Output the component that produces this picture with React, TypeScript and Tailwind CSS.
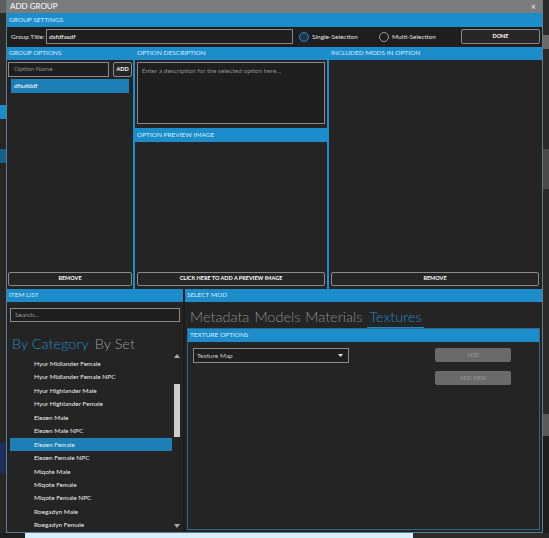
import React from "react";

const items = [
  "Hyur Midlander Female",
  "Hyur Midlander Female NPC",
  "Hyur Highlander Male",
  "Hyur Highlander Female",
  "Elezen Male",
  "Elezen Male NPC",
  "Elezen Female",
  "Elezen Female NPC",
  "Miqote Male",
  "Miqote Female",
  "Miqote Female NPC",
  "Roegadyn Male",
  "Roegadyn Female",
];

function Header({ children }: { children: React.ReactNode }) {
  return (
    <div className="h-[13px] shrink-0 bg-[#1d8ccb] pl-[2px] flex items-center text-[6.5px] text-[#d6eefb] uppercase leading-none">
      {children}
    </div>
  );
}

function DarkButton({ children, className = "" }: { children: React.ReactNode; className?: string }) {
  return (
    <div
      className={
        "h-[14px] shrink-0 border border-[#8a8a8a] rounded-[2px] bg-[#262626] flex items-center justify-center text-[5.5px] font-bold text-white leading-none " +
        className
      }
    >
      {children}
    </div>
  );
}

export default function App() {
  return (
    <div className="w-[549px] h-[538px] overflow-hidden bg-[#2b2b2b] flex flex-col font-['Lato','Noto_Sans',sans-serif]">
      <div className="flex h-[533px]">
        {/* background app, left edge */}
        <div className="w-[6px] flex flex-col shrink-0">
          <div className="h-[13px] bg-[#5e5e5e]" />
          <div className="h-[92px] bg-[#2a2a2a]" />
          <div className="h-[14px] bg-[#1e8bc8]" />
          <div className="h-[30px] bg-[#262626]" />
          <div className="h-[14px] bg-[#1a5f8a]" />
          <div className="h-[280px] bg-[#262626]" />
          <div className="h-[30px] bg-[#1b2f5a]" />
          <div className="flex-1 bg-[#262626]" />
        </div>

        {/* dialog */}
        <div className="w-[537px] shrink-0 border-x border-b border-[#5d7d8d] bg-[#1d8ccb] flex flex-col">
          {/* title bar */}
          <div className="h-[13px] bg-[#7c7c7c] flex items-center pl-[3px] pr-[6px] text-white">
            <span className="text-[8px] leading-none">ADD GROUP</span>
            <span className="ml-auto text-[9px] leading-none text-[#e8e8e8]">×</span>
          </div>
          <div className="h-[14px] bg-[#1d8ccb] pl-[2px] flex items-center text-[6.5px] text-[#d6eefb] leading-none">
            GROUP SETTINGS
          </div>
          {/* settings row */}
          <div className="h-[20px] bg-[#1e1e1e] flex items-center pl-[4px] text-[6.5px] text-[#e0e0e0]">
            <span className="w-[35px] shrink-0">Group Title:</span>
            <div className="w-[247px] h-[15px] border border-[#8a8a8a] bg-[#1f1f1f] flex items-center pl-[2px] text-white">
              dsfdfasdf
            </div>
            <div className="ml-[6px] w-[80px] flex items-center gap-[3px]">
              <div className="w-[10px] h-[10px] rounded-full border border-[#1e8bc8] bg-[#1f3642] shrink-0" />
              <span>Single-Selection</span>
            </div>
            <div className="flex items-center gap-[3px]">
              <div className="w-[10px] h-[10px] rounded-full border border-[#9a9a9a] bg-[#1e1e1e] shrink-0" />
              <span>Multi-Selection</span>
            </div>
            <DarkButton className="ml-auto mr-[2px] w-[79px] h-[15px]">DONE</DarkButton>
          </div>

          {/* group options row */}
          <div className="h-[243px] flex gap-[2px]">
            <div className="w-[126px] flex flex-col">
              <Header>GROUP OPTIONS</Header>
              <div className="flex-1 bg-[#242424] flex flex-col">
                <div className="flex mt-[2px] ml-[1px] gap-[4px]">
                  <div className="w-[101px] h-[15px] border border-[#8a8a8a] bg-[#1f1f1f] flex items-center pl-[5px] text-[6.5px] text-[#8f8f8f]">
                    Option Name
                  </div>
                  <DarkButton className="w-[19px] h-[15px]">ADD</DarkButton>
                </div>
                <div className="mt-[2px] ml-[4px] w-[118px] h-[14px] bg-[#1d7fb6] flex items-center pl-[3px] text-[6.5px] text-white">
                  dfsafddf
                </div>
                <DarkButton className="mt-auto mb-[3px] ml-[1px] w-[124px]">REMOVE</DarkButton>
              </div>
            </div>
            <div className="w-[192px] flex flex-col">
              <Header>OPTION DESCRIPTION</Header>
              <div className="h-[68px] bg-[#242424] pt-[2px] pl-[2px]">
                <div className="w-[188px] h-[62px] border border-[#8a8a8a] bg-[#1f1f1f] pl-[4px] pt-[3px] text-[6.5px] text-[#8f8f8f]">
                  Enter a description for the selected option here...
                </div>
              </div>
              <div className="h-[14px] bg-[#1d8ccb] pl-[2px] flex items-center text-[6.5px] text-[#d6eefb] leading-none">
                OPTION PREVIEW IMAGE
              </div>
              <div className="flex-1 bg-[#242424] flex flex-col">
                <DarkButton className="mt-auto mb-[3px] ml-[2px] w-[188px]">CLICK HERE TO ADD A PREVIEW IMAGE</DarkButton>
              </div>
            </div>
            <div className="flex-1 flex flex-col">
              <Header>INCLUDED MODS IN OPTION</Header>
              <div className="flex-1 bg-[#242424] flex flex-col">
                <DarkButton className="mt-auto mb-[3px] ml-[2px] w-[208px]">REMOVE</DarkButton>
              </div>
            </div>
          </div>

          {/* item list / select mod */}
          <div className="flex-1 flex gap-[2px] bg-[#1b1b1b]">
            <div className="w-[176px] flex flex-col">
              <Header>ITEM LIST</Header>
              <div className="flex-1 bg-[#242424] flex flex-col">
                <div className="mt-[6px] ml-[3px] w-[170px] h-[14px] border border-[#8a8a8a] bg-[#1f1f1f] flex items-center pl-[4px] text-[6.5px] text-[#9a9a9a]">
                  Search...
                </div>
                <div className="h-[29px] flex items-end pl-[5px] gap-[6px] text-[14.5px] font-light leading-none">
                  <span className="text-[#1e8bc8]">By Category</span>
                  <span className="text-[#9b9b9b]">By Set</span>
                </div>
                <div className="flex-1 flex overflow-hidden">
                  <div className="w-[162px] ml-[3px] pt-[6px] overflow-hidden">
                    {items.map((it) => (
                      <div
                        key={it}
                        className={
                          "h-[13.46px] flex items-center pl-[24px] text-[6.5px] text-[#ececec] " +
                          (it === "Elezen Female" ? "bg-[#1d7fb6]" : "")
                        }
                      >
                        {it}
                      </div>
                    ))}
                  </div>
                  <div className="w-[8px] ml-[1px] flex flex-col items-center pt-[3px] pb-[4px]">
                    <svg width="6" height="4" viewBox="0 0 6 4">
                      <path d="M0 4 L3 0 L6 4 Z" fill="#a8a8a8" />
                    </svg>
                    <div className="mt-[26px] w-[6px] h-[53px] bg-[#cdcdcd]" />
                    <div className="flex-1" />
                    <svg width="6" height="4" viewBox="0 0 6 4">
                      <path d="M0 0 L6 0 L3 4 Z" fill="#a8a8a8" />
                    </svg>
                  </div>
                </div>
              </div>
            </div>
            <div className="flex-1 flex flex-col">
              <Header>SELECT MOD</Header>
              <div className="flex-1 bg-[#242424] flex flex-col">
                <div className="h-[26px] flex items-end pl-[5px] gap-[5px] text-[14.5px] font-light leading-none">
                  <span className="text-[#8c8c8c] pb-[4px]">Metadata</span>
                  <span className="text-[#8c8c8c] pb-[4px]">Models</span>
                  <span className="text-[#8c8c8c] pb-[4px]">Materials</span>
                  <span className="text-[#1e8bc8] pb-[3px] border-b border-[#1e8bc8] px-[2px]">Textures</span>
                </div>
                <div className="flex-1 mx-[2px] mb-[2px] border border-[#2d6789] flex flex-col">
                  <div className="h-[13px] bg-[#1d8ccb] pl-[2px] flex items-center text-[6.5px] text-[#d6eefb] leading-none">
                    TEXTURE OPTIONS
                  </div>
                  <div className="flex-1 bg-[#242424] flex items-start pt-[6px]">
                    <div className="ml-[5px] w-[156px] h-[15px] border border-[#8a8a8a] bg-[#1f1f1f] flex items-center pl-[3px] pr-[5px] text-[6.5px] text-[#c8c8c8]">
                      Texture Map
                      <svg className="ml-auto" width="5" height="3" viewBox="0 0 5 3">
                        <path d="M0 0 L5 0 L2.5 3 Z" fill="#e0e0e0" />
                      </svg>
                    </div>
                    <div className="ml-[86px] w-[76px] flex flex-col gap-[9px]">
                      <div className="h-[14px] rounded-[2px] bg-[#6a6a6a] flex items-center justify-center text-[5.5px] text-[#9c9c9c]">
                        ADD
                      </div>
                      <div className="h-[14px] rounded-[2px] bg-[#6a6a6a] flex items-center justify-center text-[5.5px] text-[#9c9c9c]">
                        ADD NEW
                      </div>
                    </div>
                  </div>
                </div>
              </div>
            </div>
          </div>
        </div>

        {/* background app, right edge */}
        <div className="flex-1 flex flex-col">
          <div className="h-[35px] bg-[#2b2b2b]" />
          <div className="h-[14px] bg-[#6a6a6a]" />
          <div className="h-[100px] bg-[#2b2b2b]" />
          <div className="h-[40px] bg-[#4a4a4a]" />
          <div className="h-[225px] bg-[#2b2b2b]" />
          <div className="h-[22px] bg-[#5a5a5a]" />
          <div className="flex-1 bg-[#1e1e1e]" />
        </div>
      </div>
      <div className="flex-1 flex">
        <div className="w-[25px] bg-[#1e1e1e]" />
        <div className="w-[388px] bg-[#d9eefb]" />
        <div className="flex-1 bg-[#2b2b2b]" />
      </div>
    </div>
  );
}
